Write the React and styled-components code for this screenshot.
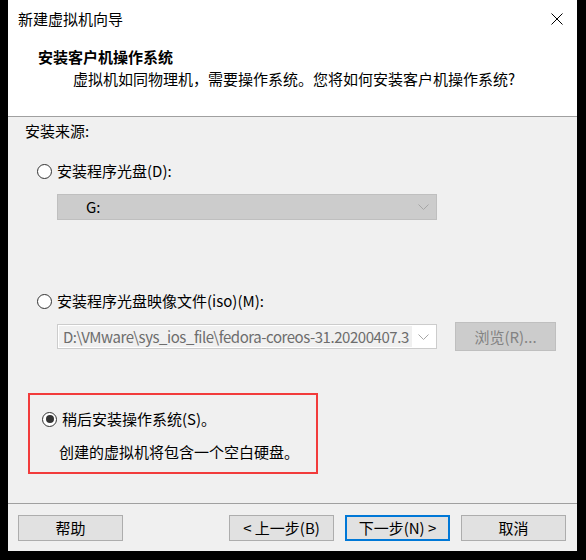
import React, { useState } from "react";
import styled, { createGlobalStyle } from "styled-components";

const GlobalStyle = createGlobalStyle`
  html, body {
    margin: 0;
    padding: 0;
    background: #000;
  }
  body {
    font-family: "Noto Sans CJK SC", "Noto Sans", sans-serif;
    font-size: 15px;
    color: #000;
  }
`;

const Screen = styled.div`
  width: 586px;
  height: 560px;
  background: #000;
  padding-left: 8px;
  box-sizing: border-box;
`;

const Dialog = styled.div`
  width: 569px;
  height: 551px;
  background: #f0f0f0;
  display: flex;
  flex-direction: column;
`;

const TitleBar = styled.div`
  height: 38px;
  background: #fff;
  display: flex;
  align-items: center;
  justify-content: space-between;
  padding: 0 14px 0 10px;
  line-height: 20px;
`;

const CloseButton = styled.div`
  width: 12px;
  height: 12px;
  display: flex;
`;

const Header = styled.div`
  height: 78px;
  background: #fff;
  border-bottom: 1px solid #a0a0a0;
  display: flex;
  flex-direction: column;
  line-height: 20px;
`;

const HeaderTitle = styled.div`
  font-weight: bold;
  margin: 9px 0 0 30px;
`;

const HeaderText = styled.div`
  margin: 2px 0 0 65px;
`;

const Content = styled.div`
  flex: 1;
  display: flex;
  flex-direction: column;
  padding: 4px 0 0 17px;
  line-height: 20px;
`;

const Row = styled.label`
  display: flex;
  align-items: center;
  gap: 5px;
  margin: ${(p) => p.$top || 0}px 0 0 12px;
  cursor: default;
`;

const RadioCircle = styled.span`
  width: 15px;
  height: 15px;
  border-radius: 50%;
  border: 1px solid #333;
  background: #fff;
  box-sizing: border-box;
  display: flex;
  align-items: center;
  justify-content: center;
  &::after {
    content: "";
    width: 8px;
    height: 8px;
    border-radius: 50%;
    background: ${(p) => (p.$checked ? "#333" : "transparent")};
  }
`;

const Combo = styled.div`
  width: 380px;
  height: ${(p) => (p.$disabled ? 26 : 25)}px;
  margin: ${(p) => p.$top}px 0 0 32px;
  box-sizing: border-box;
  border: 1px solid ${(p) => (p.$disabled ? "#bfbfbf" : "#cccccc")};
  background: ${(p) => (p.$disabled ? "#cccccc" : "#fff")};
  display: flex;
  align-items: center;
  padding: 1px;
`;

const ComboText = styled.div`
  flex: 1;
  height: 100%;
  display: flex;
  align-items: center;
  overflow: hidden;
  white-space: nowrap;
  padding-left: ${(p) => p.$indent}px;
  background: ${(p) => p.$fill || "transparent"};
  color: ${(p) => p.$color || "#000"};
  letter-spacing: ${(p) => p.$tight || 0}px;
`;

const Chevron = styled.div`
  width: 23px;
  display: flex;
  justify-content: center;
  align-items: center;
`;

const FileLine = styled.div`
  display: flex;
  align-items: center;
  margin-top: 11px;
`;

const SideButton = styled.div`
  width: 101px;
  height: 29px;
  margin-left: 18px;
  box-sizing: border-box;
  border: 1px solid #bfbfbf;
  background: #cccccc;
  color: #838383;
  display: flex;
  align-items: center;
  justify-content: center;
`;

const Highlight = styled.div`
  width: 290px;
  height: 81px;
  margin: 42px 0 0 3px;
  box-sizing: border-box;
  border: 2px solid #f23b3b;
  padding-top: 14px;
  display: flex;
  flex-direction: column;
`;

const Note = styled.div`
  margin: 13px 0 0 29px;
`;

const Footer = styled.div`
  height: 48px;
  box-sizing: border-box;
  border-top: 1px solid #a0a0a0;
  padding: 11px 10px 0 10px;
  display: flex;
  align-items: flex-start;
  gap: 11px;
`;

const Button = styled.button`
  width: 105px;
  height: 26px;
  box-sizing: border-box;
  border: ${(p) => (p.$primary ? "2px solid #0078d7" : "1px solid #adadad")};
  background: #e1e1e1;
  font-family: inherit;
  font-size: 15px;
  color: #000;
  padding: 0;
  line-height: 20px;
  margin-right: ${(p) => p.$push || 0}px;
`;

const ChevronIcon = () => (
  <svg width="11" height="6" viewBox="0 0 11 6">
    <polyline points="0.5,0.5 5.5,5.5 10.5,0.5" fill="none" stroke="#a6a6a6" strokeWidth="1" />
  </svg>
);

const Radio = ({ checked, top, children, onSelect }) => (
  <Row $top={top} onClick={onSelect}>
    <RadioCircle $checked={checked} />
    <span>{children}</span>
  </Row>
);

export default function App() {
  const [source, setSource] = useState("later");

  return (
    <>
      <GlobalStyle />
      <Screen>
        <Dialog>
          <TitleBar>
            <span>新建虚拟机向导</span>
            <CloseButton>
              <svg width="12" height="12" viewBox="0 0 12 12">
                <path d="M0.5 0.5L11.5 11.5M11.5 0.5L0.5 11.5" stroke="#000" strokeWidth="1" />
              </svg>
            </CloseButton>
          </TitleBar>
          <Header>
            <HeaderTitle>安装客户机操作系统</HeaderTitle>
            <HeaderText>虚拟机如同物理机，需要操作系统。您将如何安装客户机操作系统?</HeaderText>
          </Header>
          <Content>
            <div>安装来源:</div>
            <Radio top={20} checked={source === "disc"} onSelect={() => setSource("disc")}>
              安装程序光盘(D):
            </Radio>
            <Combo $disabled $top={13}>
              <ComboText $indent={27}>G:</ComboText>
              <Chevron>
                <ChevronIcon />
              </Chevron>
            </Combo>
            <Radio top={71} checked={source === "iso"} onSelect={() => setSource("iso")}>
              安装程序光盘映像文件(iso)(M):
            </Radio>
            <FileLine>
              <Combo $top={0}>
                <ComboText $indent={4} $fill="#f0f0f0" $color="#6d6d6d" $tight={-0.45}>
                  D:\VMware\sys_ios_file\fedora-coreos-31.20200407.3
                </ComboText>
                <Chevron>
                  <ChevronIcon />
                </Chevron>
              </Combo>
              <SideButton>浏览(R)...</SideButton>
            </FileLine>
            <Highlight>
              <Radio top={0} checked={source === "later"} onSelect={() => setSource("later")}>
                稍后安装操作系统(S)。
              </Radio>
              <Note>创建的虚拟机将包含一个空白硬盘。</Note>
            </Highlight>
          </Content>
          <Footer>
            <Button $push={95}>帮助</Button>
            <Button>&lt; 上一步(B)</Button>
            <Button $primary>下一步(N) &gt;</Button>
            <Button>取消</Button>
          </Footer>
        </Dialog>
      </Screen>
    </>
  );
}
